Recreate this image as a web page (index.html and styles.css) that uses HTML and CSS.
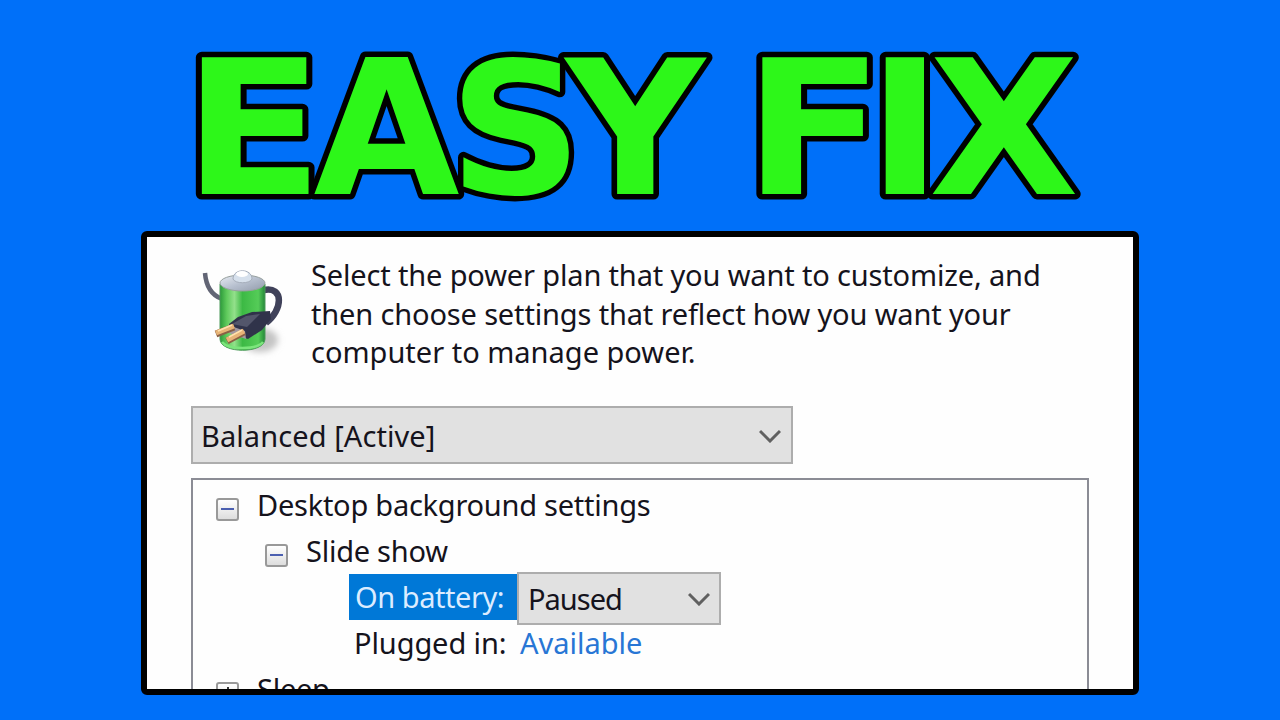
FILE: index.html
```html
<!DOCTYPE html>
<html lang="en">
<head>
    <meta charset="UTF-8">
    <meta name="viewport" content="width=device-width, initial-scale=1.0">
    <title>Easy Fix</title>
    <link rel="stylesheet" href="styles.css">
</head>
<body>
    <!-- Headline, each letter has its own width -->
    <svg class="headline" viewBox="0 0 1280 231" role="img">
        <text transform="translate(183 194) scale(1.1 1)">E</text>
        <text transform="translate(313.5 194) scale(1.01 1)">A</text>
        <text transform="translate(449 193) scale(.99 .98)">S</text>
        <text transform="translate(565.5 194) scale(1.03 1)">Y</text>
        <text transform="translate(743.5 194) scale(1.1 1)">F</text>
        <text transform="translate(867 194) scale(1.09 1)">I</text>
        <text transform="translate(929 194) scale(1.04 1)">X</text>
    </svg>

    <!-- Power options window -->
    <main class="panel">
        <header class="intro">
            <svg class="battery" viewBox="0 0 90 96">
                <defs>
                    <linearGradient id="cell">
                        <stop offset="0" stop-color="#2c9a3a"/>
                        <stop offset=".15" stop-color="#5fca5c"/>
                        <stop offset=".32" stop-color="#93e08b"/>
                        <stop offset=".5" stop-color="#3cb944"/>
                        <stop offset=".85" stop-color="#55cc58"/>
                        <stop offset="1" stop-color="#25883a"/>
                    </linearGradient>
                    <linearGradient id="cap" x2="1" y2="1">
                        <stop offset="0" stop-color="#e9edf3"/>
                        <stop offset=".5" stop-color="#b7c0cf"/>
                        <stop offset="1" stop-color="#929bab"/>
                    </linearGradient>
                    <filter id="soft" x="-30%" y="-30%" width="160%" height="160%"><feGaussianBlur stdDeviation="3"/></filter>
                </defs>
                <ellipse cx="60" cy="75" rx="18" ry="12" fill="#c4c4c4" filter="url(#soft)"/>
                <path d="M5 8C6 21 11 30 22 34" fill="none" stroke="#626575" stroke-width="4.5"/>
                <path d="M64 25C84 21 83 45 66 58" fill="none" stroke="#40425a" stroke-width="6.5"/>
                <path d="M20 19V74C20 89 65 89 65 74V19Z" fill="url(#cell)" stroke="#4c9a5a"/>
                <path d="M22 77C28 85 57 85 63 77" fill="none" stroke="#7ce57c" stroke-width="2.5"/>
                <ellipse cx="42.500" cy="18" rx="22.500" ry="8" fill="url(#cap)" stroke="#98a19f"/>
                <path d="M33 14C33 3 52 3 52 14C50 19 35 19 33 14Z" fill="#d6e0ec" stroke="#a5adba"/>
                <ellipse cx="42" cy="9" rx="6" ry="3" fill="#fff"/>
                <path d="M29 59L38 52L52 47L70 46L71 54L62 65L48 74L31 68Z" fill="#30334a"/>
                <path d="M32 59L46 51L60 49L47 62Z" fill="#53566b"/>
                <path d="M28 60L45 66L46 74L29 68Z" fill="#a299a0"/>
                <path d="M34 62L16 69M44 67L27 76" stroke="#8a6045" stroke-width="7"/>
                <path d="M34 61L16 68M44 66L27 75" stroke="#e7b477" stroke-width="5"/>
                <path d="M32 60L18 66M42 65L29 72" stroke="#ffe2af" stroke-width="1.5"/>
            </svg>
            <p class="intro-text">
                <span class="line">Select the power plan that you want to customize, and</span>
                <span class="line">then choose settings that reflect how you want your</span>
                <span class="line last">computer to manage power.</span>
            </p>
        </header>

        <div class="select plan-select">
            <span>Balanced [Active]</span>
            <svg class="chevron" viewBox="0 0 22 14"><path d="M1 2L11 12L21 2"/></svg>
        </div>

        <section class="tree">
            <div class="row">
                <span class="toggle"></span>
                <span class="label">Desktop background settings</span>
            </div>
            <div class="row level-two">
                <span class="toggle"></span>
                <span class="label">Slide show</span>
            </div>
            <div class="row level-three">
                <span class="selected">On battery:</span>
                <div class="select value-select">
                    <span>Paused</span>
                    <svg class="chevron" viewBox="0 0 22 14"><path d="M1 2L11 12L21 2"/></svg>
                </div>
            </div>
            <div class="row level-three">
                <span class="name">Plugged in:</span>
                <a class="value">Available</a>
            </div>
            <div class="row">
                <span class="toggle plus"></span>
                <span class="label">Sleep</span>
            </div>
        </section>
    </main>
</body>
</html>
```
FILE: styles.css
```css
* {
    box-sizing: border-box;
}

body {
    margin: 0;
    width: 1280px;
    height: 720px;
    overflow: hidden;
    background: #0070f9;
    color: #15131c;
    font-family: "Noto Sans", sans-serif;
    font-size: 29px;
}

/* Outlined headline */
.headline {
    display: block;
    width: 1280px;
    height: 231px;
    overflow: visible;
}

.headline text {
    font-family: "DejaVu Sans", sans-serif;
    font-size: 187px;
    font-weight: bold;
    fill: #2df719;
    stroke: #000;
    stroke-width: 11px;
    stroke-linejoin: round;
    paint-order: stroke;
}

/* White window */
.panel {
    width: 998px;
    height: 464px;
    margin-left: 141px;
    padding: 19px 44px 0;
    overflow: hidden;
    background: #fefefe;
    border: 6px solid #000;
    border-radius: 6px;
}

.intro {
    display: flex;
    height: 150px;
}

.battery {
    width: 90px;
    height: 96px;
    margin: 9px 21px 0 9px;
    flex: none;
}

.intro-text {
    margin: 0;
    line-height: 38.5px;
    white-space: nowrap;
}

.line {
    display: block;
    letter-spacing: -0.15px;
}

.last {
    letter-spacing: 0;
}

/* Drop downs */
.select {
    display: flex;
    align-items: center;
    justify-content: space-between;
    background: #e1e1e1;
    border: 2px solid #adadad;
}

.plan-select {
    width: 602px;
    height: 58px;
    padding: 0 10px 0 8px;
    letter-spacing: 0.08px;
}

.value-select {
    width: 204px;
    height: 53px;
    padding: 0 9px;
    letter-spacing: -1px;
}

.chevron {
    width: 22px;
    height: 14px;
    margin-top: 2px;
    fill: none;
    stroke: #606060;
    stroke-width: 3;
}

/* Settings tree */
.tree {
    width: 898px;
    height: 260px;
    margin-top: 14px;
    padding: 3px 0 0 23px;
    border: 2px solid #8b8c95;
}

.row {
    display: flex;
    align-items: center;
    height: 46px;
    white-space: nowrap;
}

.toggle {
    display: grid;
    place-items: center;
    width: 23px;
    height: 23px;
    margin: 6px 18px 0 0;
    background: linear-gradient(#fff, #ddd);
    border: 2px solid #999;
    border-radius: 3px;
}

.toggle::before,
.toggle::after {
    content: "";
    grid-area: 1 / 1;
    width: 13px;
    height: 2px;
    background: #4b5fb0;
}

.plus::before,
.plus::after {
    background: #333;
}

.plus::after {
    width: 2px;
    height: 13px;
}

.label {
    padding-bottom: 4px;
    letter-spacing: -0.25px;
}

.level-two {
    padding-left: 49px;
}

.level-three {
    padding-left: 133px;
}

.selected {
    width: 168px;
    height: 46px;
    margin-bottom: 2px;
    padding-left: 6px;
    line-height: 46px;
    letter-spacing: -0.45px;
    background: #0078d7;
    color: #dcecff;
}

.name {
    width: 171px;
    padding: 0 0 4px 5px;
    letter-spacing: -0.1px;
}

.value {
    padding-bottom: 4px;
    color: #2876d5;
}
```
